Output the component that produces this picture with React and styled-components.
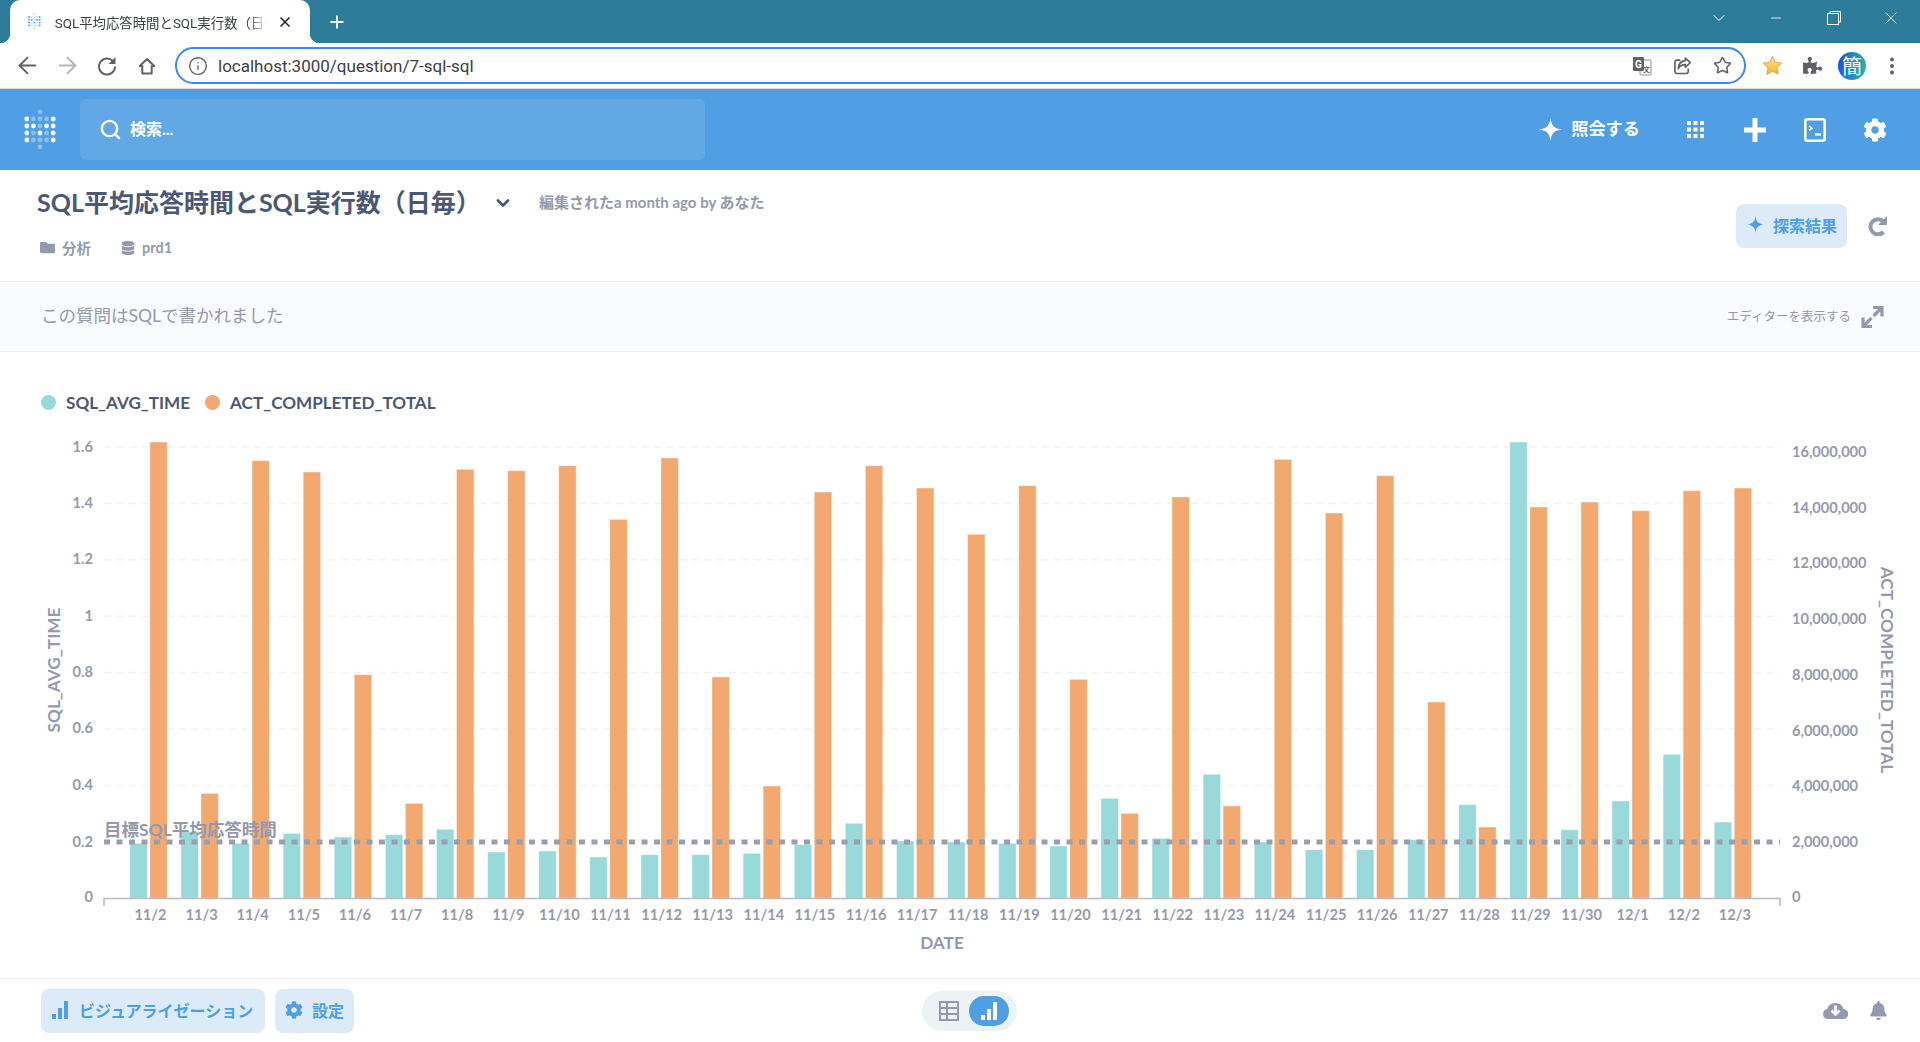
import React from "react";
import styled, { createGlobalStyle } from "styled-components";
import { ArrowLeft, ArrowRight, Info, Star, Search, ChevronDown, X, Plus, Minus } from "lucide-react";
import { FaPuzzlePiece, FaFolder, FaDatabase, FaCog, FaBell } from "react-icons/fa";

const BLUE = "#509ee3";
const DARK = "#4c5773";
const MID = "#949aab";
const UI = `Lato, "Noto Sans CJK JP", sans-serif`;
const CHROME = `Roboto, "Noto Sans CJK JP", sans-serif`;

const Global = createGlobalStyle`
  html, body { margin: 0; padding: 0; background: #fff; }
  body { font-family: ${UI}; overflow: hidden; }
  * { box-sizing: border-box; }
`;

const Page = styled.div`
  width: 1920px;
  height: 1042px;
  display: flex;
  flex-direction: column;
  overflow: hidden;
`;

/* browser chrome */
const TabStrip = styled.div`
  height: 43px;
  background: #2d7c9a;
  display: flex;
  align-items: flex-end;
  padding-left: 10px;
  flex: none;
`;
const Tab = styled.div`
  position: relative;
  width: 300px;
  height: 43px;
  background: #fff;
  border-radius: 10px 10px 0 0;
  display: flex;
  align-items: center;
  padding: 0 12px 0 18px;
  font: 400 13.4px ${CHROME};
  color: #3c4043;
  &::before, &::after {
    content: "";
    position: absolute;
    bottom: 0;
    width: 10px;
    height: 10px;
  }
  &::before { left: -10px; background: radial-gradient(circle at 0 0, transparent 10px, #fff 10.5px); }
  &::after { right: -10px; background: radial-gradient(circle at 100% 0, transparent 10px, #fff 10.5px); }
`;
const TabTitle = styled.span`
  margin-left: 14px;
  width: 212px;
  white-space: nowrap;
  overflow: hidden;
  mask-image: linear-gradient(90deg, #000 92%, transparent 100%);
`;
const TabClose = styled.span`
  margin-left: 10px;
  display: flex;
  color: #202124;
`;
const NewTab = styled.span`
  margin-left: 11px;
  width: 32px;
  height: 43px;
  display: flex;
  align-items: center;
  justify-content: center;
  color: #fff;
`;
const WindowControls = styled.div`
  margin-left: auto;
  display: flex;
  align-self: flex-start;
`;
const WindowButton = styled.span`
  width: 57.5px;
  height: 36px;
  display: flex;
  align-items: center;
  justify-content: center;
  color: #fff;
`;
const Toolbar = styled.div`
  height: 46px;
  background: #fff;
  border-bottom: 1px solid #dadce0;
  display: flex;
  align-items: center;
  padding-left: 7px;
  flex: none;
`;
const ToolButton = styled.span`
  width: 40px;
  height: 40px;
  flex: none;
  display: flex;
  align-items: center;
  justify-content: center;
  color: ${(p) => (p.$muted ? "#b4b6b9" : "#5f6368")};
`;
const AddressBar = styled.div`
  margin-left: 8px;
  width: 1571px;
  height: 37px;
  border: 2px solid #4285f4;
  border-radius: 19px;
  display: flex;
  align-items: center;
  padding: 0 2px 0 10.5px;
  flex: none;
`;
const UrlText = styled.span`
  margin-left: 10.5px;
  font: 400 17px ${CHROME};
  color: #3c4043;
`;
const AddressIcons = styled.div`
  margin-left: auto;
  display: flex;
`;
const Extensions = styled.div`
  margin-left: 6px;
  display: flex;
`;
const Avatar = styled.span`
  width: 28px;
  height: 28px;
  border-radius: 50%;
  background: linear-gradient(100deg, #2b3fe0 0%, #1c86c8 45%, #1fc28e 100%);
  color: #fff;
  display: flex;
  align-items: center;
  justify-content: center;
  font: 400 20px "Noto Sans CJK JP", sans-serif;
`;

/* metabase nav */
const Nav = styled.div`
  height: 81px;
  flex: none;
  background: ${BLUE};
  display: flex;
  align-items: center;
  color: #fff;
`;
const LogoSlot = styled.div`
  width: 80px;
  display: flex;
  justify-content: center;
`;
const SearchBox = styled.div`
  width: 625px;
  height: 61px;
  border-radius: 6px;
  background: #62a8e6;
  display: flex;
  align-items: center;
  gap: 8px;
  padding-left: 19px;
  font: 700 16px/20px ${UI};
`;
const SearchLabel = styled.span`
  position: relative;
  top: -1px;
`;
const NavActions = styled.div`
  margin-left: auto;
  display: flex;
  align-items: center;
  padding-right: 15px;
`;
const AskQuestion = styled.div`
  display: flex;
  align-items: center;
  gap: 9px;
  margin-right: 25px;
  font: 700 17.2px/22px ${UI};
`;
const AskLabel = styled.span`
  position: relative;
  top: -1px;
`;
const NavIcon = styled.span`
  width: 60px;
  display: flex;
  justify-content: center;
  align-items: center;
`;

/* question header */
const Header = styled.div`
  height: 111px;
  flex: none;
  display: flex;
  justify-content: space-between;
  align-items: center;
  padding: 0 32px 0 37px;
`;
const HeaderLeft = styled.div`
  display: flex;
  flex-direction: column;
  gap: 21px;
  padding-bottom: 9px;
`;
const TitleRow = styled.div`
  display: flex;
  align-items: center;
  height: 32px;
`;
const Title = styled.h1`
  margin: 0;
  font: 700 25px ${UI};
  color: ${DARK};
  white-space: nowrap;
  width: 431px;
`;
const TitleCaret = styled.span`
  margin-left: 25px;
  margin-top: 5px;
  display: flex;
  color: ${DARK};
`;
const Edited = styled.span`
  margin-left: 26px;
  margin-top: 2px;
  font: 700 15px ${UI};
  color: ${MID};
`;
const Crumbs = styled.div`
  display: flex;
  align-items: center;
  gap: 30px;
  padding-left: 3px;
  height: 20px;
`;
const Crumb = styled.span`
  display: flex;
  align-items: center;
  gap: 7px;
  font: 700 14.5px ${UI};
  color: ${MID};
`;
const HeaderRight = styled.div`
  display: flex;
  align-items: center;
  gap: 21px;
`;
const SoftButton = styled.div`
  height: 44px;
  border-radius: 8px;
  background: #ddebf9;
  color: ${BLUE};
  display: flex;
  align-items: center;
  gap: 9px;
  padding: 0 10px 2px 11px;
  font: 700 16px ${UI};
`;
const RefreshSlot = styled.span`
  display: flex;
  color: ${MID};
`;

/* native query bar */
const NativeBar = styled.div`
  height: 71px;
  flex: none;
  background: #f9fbfc;
  border-top: 1px solid #edf0f2;
  border-bottom: 1px solid #edf0f2;
  display: flex;
  align-items: center;
  justify-content: space-between;
  padding: 0 36px 0 41px;
  color: ${MID};
`;
const NativeNote = styled.span`
  font: 400 17.5px ${UI};
  padding-bottom: 4px;
`;
const EditorToggle = styled.span`
  display: flex;
  align-items: center;
  gap: 10px;
  font: 400 12.5px ${UI};
`;
const EditorLabel = styled.span`
  padding-bottom: 2px;
`;

/* chart */
const Main = styled.div`
  flex: 1;
  min-height: 0;
  display: flex;
  flex-direction: column;
`;
const Legend = styled.div`
  display: flex;
  align-items: center;
  height: 20px;
  margin-top: 40px;
  padding-left: 41px;
  flex: none;
`;
const LegendItem = styled.div`
  display: flex;
  align-items: center;
  gap: 10px;
  margin-right: 15px;
  font: 700 17.1px ${UI};
  color: ${DARK};
`;
const LegendDot = styled.span`
  width: 15px;
  height: 15px;
  border-radius: 50%;
  background: ${(p) => p.$color};
`;
const ChartSvg = styled.svg`
  display: block;
  width: 1920px;
  height: 548px;
  margin-top: 18px;
  flex: none;
`;
const GridLine = styled.line`
  stroke: #f2f2f3;
  stroke-width: 1.5;
  stroke-dasharray: 7 5.5;
`;
const Bar = styled.rect`
  fill: ${(p) => p.$color};
  stroke: #fff;
  stroke-opacity: 0.45;
  stroke-width: 1;
`;
const AxisPath = styled.path`
  stroke: #b8bbc3;
  stroke-width: 1.5;
  fill: none;
`;
const TickText = styled.text`
  font: 700 14.6px ${UI};
  fill: ${MID};
`;
const AxisTitle = styled.text`
  font: 700 17.2px ${UI};
  fill: ${MID};
`;
const GoalLine = styled.line`
  stroke: #9a9fb0;
  stroke-width: 5;
  stroke-dasharray: 6 6.5;
`;
const GoalLabel = styled.text`
  font: 700 17.5px ${UI};
  fill: ${MID};
`;

/* footer */
const Footer = styled.div`
  height: 64px;
  flex: none;
  border-top: 1px solid #edf0f2;
  display: flex;
  align-items: center;
  padding: 0 32px 0 41px;
`;
const VizButton = styled(SoftButton)`
  width: 224px;
  margin-right: 10px;
  gap: 11px;
  padding: 0 0 2px 11px;
`;
const SettingsButton = styled(SoftButton)`
  width: 79px;
  gap: 9px;
  padding: 0 0 2px 10px;
`;
const ViewToggle = styled.div`
  margin-left: 568px;
  width: 95px;
  height: 40px;
  border-radius: 20px;
  background: #edf2f5;
  display: flex;
  align-items: center;
  padding-left: 17px;
  gap: 10px;
`;
const ViewOn = styled.span`
  width: 40px;
  height: 30px;
  border-radius: 15px;
  background: ${BLUE};
  display: flex;
  align-items: center;
  justify-content: center;
`;
const FooterIcons = styled.div`
  margin-left: auto;
  display: flex;
  align-items: center;
  gap: 21px;
  color: ${MID};
`;

/* icons */
const Sparkle = ({ size, color }) => (
  <svg width={size} height={size} viewBox="0 0 24 24" fill={color}>
    <path d="M12 0C12.8 7 15 11 24 12 15 13 12.8 17 12 24 11.2 17 9 13 0 12 9 11 11.2 7 12 0Z" />
  </svg>
);

const logoDots = [
  [0, 2, 0.35],
  [1, 0, 1], [1, 1, 0.35], [1, 2, 0.35], [1, 3, 0.35], [1, 4, 1],
  [2, 0, 1], [2, 1, 1], [2, 2, 0.35], [2, 3, 1], [2, 4, 1],
  [3, 0, 1], [3, 1, 0.35], [3, 2, 1], [3, 3, 0.35], [3, 4, 1],
  [4, 0, 1], [4, 1, 0.35], [4, 2, 0.35], [4, 3, 0.35], [4, 4, 1],
  [5, 2, 0.35],
];
const Logo = ({ color = "#fff", scale = 1 }) => (
  <svg width={32 * scale} height={41 * scale} viewBox="0 0 32 41" fill={color}>
    {logoDots.map(([r, c, o]) => (
      <circle key={`${r}-${c}`} cx={2.8 + c * 6.6} cy={3 + r * 7} r="2.4" opacity={o} />
    ))}
  </svg>
);

const BarsIcon = ({ color, size = 16 }) => (
  <svg width={size} height={size + 2} viewBox="0 0 16 18" fill={color}>
    <rect x="0" y="13" width="4" height="5" />
    <rect x="6" y="7" width="4" height="11" />
    <rect x="12" y="0" width="4" height="18" />
  </svg>
);

const AppsIcon = () => (
  <svg width="17" height="17" viewBox="0 0 17 17" fill="#fff">
    {[0, 6.5, 13].flatMap((x) =>
      [0, 6.5, 13].map((y) => <rect key={`${x}-${y}`} x={x} y={y} width="4" height="4" />)
    )}
  </svg>
);

const PlusIcon = () => (
  <svg width="22" height="24" viewBox="0 0 22 24" fill="#fff">
    <rect x="0" y="9.5" width="22" height="5" />
    <rect x="8.5" y="0" width="5" height="24" />
  </svg>
);

const TerminalIcon = () => (
  <svg width="22" height="24" viewBox="0 0 22 24" fill="none" stroke="#fff">
    <rect x="1.3" y="1.3" width="19.4" height="21.4" rx="2" strokeWidth="2.6" />
    <path d="M5 8l3 2.2-3 2.2" strokeWidth="1.5" />
    <path d="M11 16.5h6" strokeWidth="2.4" />
  </svg>
);

const RefreshIcon = () => (
  <svg width="20" height="22" viewBox="0 0 20 22" fill="none" stroke="currentColor">
    <path d="M15.5 6.5A7.6 7.6 0 1 0 15.5 17" strokeWidth="4" />
    <path d="M19 1v9h-9z" fill="currentColor" stroke="none" />
  </svg>
);

const ExpandIcon = () => (
  <svg width="23" height="24" viewBox="0 0 23 24" fill="none" stroke={MID} strokeWidth="3.2">
    <path d="M12 2.5h9v9M21 2.5l-8.5 8.5" />
    <path d="M2 12.5v9h9M2 21.5l8.5-8.5" />
  </svg>
);

const TableIcon = () => (
  <svg width="20" height="20" viewBox="0 0 20 20" fill="none" stroke={MID} strokeWidth="2">
    <rect x="1" y="1" width="18" height="18" />
    <path d="M1 7h18M1 13h18M8 1v18" />
  </svg>
);

const ReloadIcon = () => (
  <svg width="20" height="20" viewBox="0 0 20 20" fill="none" stroke="currentColor" strokeWidth="2">
    <path d="M16 5.2A8 8 0 1 0 18 10.500" />
    <path d="M18.500 1v7h-7z" fill="currentColor" stroke="none" />
  </svg>
);

const HomeIcon = () => (
  <svg width="18" height="18" viewBox="0 0 18 18" fill="none" stroke="currentColor" strokeWidth="2" strokeLinejoin="round">
    <path d="M9 2L1.800 9h2.500v7.500h9.400V9h2.500z" />
  </svg>
);

const CloudDownloadIcon = () => (
  <svg width="25" height="17" viewBox="0 0 25 17">
    <path d="M5 17a5 5 0 0 1-.8-9.900A8.500 8.500 0 0 1 20.500 7a5 5 0 0 1-.5 10z" fill={MID} />
    <path d="M12.500 3.500v8.500M8.500 8.500l4 4 4-4" fill="none" stroke="#fff" strokeWidth="2.600" />
  </svg>
);

const TranslateIcon = () => (
  <svg width="20" height="20" viewBox="0 0 20 20">
    <rect x="8" y="4" width="11" height="15" rx="1" fill="#fff" stroke="#8a8d91" />
    <rect x="1" y="1" width="11" height="14" rx="1" fill="#5f6368" />
    <text x="6.5" y="11.5" textAnchor="middle" fontFamily="Roboto, sans-serif" fontWeight="700" fontSize="10" fill="#fff">G</text>
    <text x="14.5" y="16" textAnchor="middle" fontFamily="Noto Sans CJK JP, sans-serif" fontWeight="700" fontSize="7" fill="#5f6368">文</text>
  </svg>
);

const ShareIcon = () => (
  <svg width="20" height="20" viewBox="0 0 24 24" fill="none" stroke="#5f6368" strokeWidth="2" strokeLinejoin="round">
    <path d="M16 2.5l6 5.5-6 5.5v-3.2c-4.5 0-7 1.7-8.5 5 .2-6 3.2-9.300 8.500-9.800z" />
    <path d="M10 5H6a2.500 2.500 0 0 0-2.500 2.500v11A2.500 2.500 0 0 0 6 21h11a2.500 2.500 0 0 0 2.500-2.500V15" />
  </svg>
);

const RestoreIcon = () => (
  <svg width="14" height="14" viewBox="0 0 14 14" fill="none" stroke="#fff" strokeWidth="1">
    <rect x="0.5" y="2.500" width="11" height="11" />
    <path d="M3 2.500V.5h10.500v10.500h-2" />
  </svg>
);

const GoldStar = () => (
  <svg width="21" height="21" viewBox="0 0 24 24">
    <defs>
      <linearGradient id="gold" x1="0" y1="0" x2="0" y2="1">
        <stop offset="0" stopColor="#ffe9a8" />
        <stop offset="1" stopColor="#f5b312" />
      </linearGradient>
    </defs>
    <path
      d="M12 1.500l3.200 6.900 7.300.9-5.400 5.100 1.400 7.400L12 18.600l-6.500 3.700 1.400-7.400L1.500 9.300l7.300-.9z"
      fill="url(#gold)"
      stroke="#d9a441"
      strokeWidth="1"
      strokeLinejoin="round"
    />
  </svg>
);

const Kebab = () => (
  <svg width="4" height="18" viewBox="0 0 4 18" fill="#5f6368">
    <circle cx="2" cy="2.500" r="2" />
    <circle cx="2" cy="9" r="2" />
    <circle cx="2" cy="15.500" r="2" />
  </svg>
);

/* data: top edge of each bar, in page pixels */
const labels = [
  "11/2","11/3","11/4","11/5","11/6","11/7","11/8","11/9","11/10","11/11","11/12","11/13","11/14","11/15","11/16","11/17",
  "11/18","11/19","11/20","11/21","11/22","11/23","11/24","11/25","11/26","11/27","11/28","11/29","11/30","12/1","12/2","12/3",
];
const tealTops = [
  1210,1175,1210,1180,1191,1184,1168,1236, 1233,1251,1244,1244,1240,1214,1150,1203,
  1206,1210,1218,1075,1195,1003,1206,1229, 1229,1199,1094,6,1169,1083,943,1146,
].map((z) => 440 + z / 3);
const orangeTops = [
  6,1060,62,96,704,1090,88,92, 77,238,54,711,1038,156,77,144,
  283,137,718,1120,171,1098,58,219, 107,786,1161,201,186,212,152,144,
].map((z) => 440 + z / 3);

const BASE = 898.3;
const STEP = 51.11;
const TEAL = "#98d9d9";
const ORANGE = "#f2a86f";
const gridY = [447, 503.4, 559.8, 616.2, 672.6, 729, 785.4];
const leftTicks = [
  ["1.6", 452], ["1.4", 508], ["1.2", 564], ["1", 621], ["0.8", 677], ["0.6", 733], ["0.4", 790], ["0.2", 847], ["0", 902],
];
const rightTicks = [
  ["16,000,000", 456.500], ["14,000,000", 512.500], ["12,000,000", 567.500], ["10,000,000", 623.500], ["8,000,000", 680],
  ["6,000,000", 735.500], ["4,000,000", 791], ["2,000,000", 846.500], ["0", 902],
];

const Chart = () => (
  <ChartSvg viewBox="0 430 1920 548">
    {gridY.map((y) => (
      <GridLine key={y} x1="104" x2="1780" y1={y} y2={y} />
    ))}
    {labels.map((l, i) => (
      <g key={l}>
        <Bar x={129.8 + i * STEP} y={tealTops[i]} width={17.5} height={BASE - tealTops[i]} $color={TEAL} />
        <Bar x={149.8 + i * STEP} y={orangeTops[i]} width={17.5} height={BASE - orangeTops[i]} $color={ORANGE} />
        <TickText x={150.5 + i * STEP} y="920" textAnchor="middle">{l}</TickText>
      </g>
    ))}
    <AxisPath d="M104 906V898.500H1780V906" />
    {leftTicks.map(([t, y]) => (
      <TickText key={t} x="93" y={y} textAnchor="end">{t}</TickText>
    ))}
    {rightTicks.map(([t, y]) => (
      <TickText key={t} x="1792" y={y}>{t}</TickText>
    ))}
    <GoalLine x1="104" x2="1780" y1="842" y2="842" />
    <GoalLabel x="104" y="836">目標SQL平均応答時間</GoalLabel>
    <AxisTitle x="942" y="949" textAnchor="middle">DATE</AxisTitle>
    <AxisTitle transform="rotate(-90 53 670)" x="53" y="670" textAnchor="middle" dominantBaseline="central">SQL_AVG_TIME</AxisTitle>
    <AxisTitle transform="rotate(90 1887 670)" x="1887" y="670" textAnchor="middle" dominantBaseline="central">ACT_COMPLETED_TOTAL</AxisTitle>
  </ChartSvg>
);

export default function App() {
  return (
    <Page>
      <Global />
      <TabStrip>
        <Tab>
          <Logo color={BLUE} scale={0.4} />
          <TabTitle>SQL平均応答時間とSQL実行数（日毎）</TabTitle>
          <TabClose><X size={16} strokeWidth={2.4} /></TabClose>
        </Tab>
        <NewTab><Plus size={20} strokeWidth={2.2} /></NewTab>
        <WindowControls>
          <WindowButton><ChevronDown size={20} strokeWidth={1.2} /></WindowButton>
          <WindowButton><Minus size={16} strokeWidth={1.2} /></WindowButton>
          <WindowButton><RestoreIcon /></WindowButton>
          <WindowButton><X size={20} strokeWidth={1.2} /></WindowButton>
        </WindowControls>
      </TabStrip>
      <Toolbar>
        <ToolButton><ArrowLeft size={27} strokeWidth={1.7} /></ToolButton>
        <ToolButton $muted><ArrowRight size={27} strokeWidth={1.7} /></ToolButton>
        <ToolButton><ReloadIcon /></ToolButton>
        <ToolButton><HomeIcon /></ToolButton>
        <AddressBar>
          <Info size={20} strokeWidth={1.7} color="#5f6368" />
          <UrlText>localhost:3000/question/7-sql-sql</UrlText>
          <AddressIcons>
            <ToolButton><TranslateIcon /></ToolButton>
            <ToolButton><ShareIcon /></ToolButton>
            <ToolButton><Star size={19} strokeWidth={2} /></ToolButton>
          </AddressIcons>
        </AddressBar>
        <Extensions>
          <ToolButton><GoldStar /></ToolButton>
          <ToolButton><FaPuzzlePiece size={19} /></ToolButton>
          <ToolButton><Avatar>簡</Avatar></ToolButton>
          <ToolButton><Kebab /></ToolButton>
        </Extensions>
      </Toolbar>
      <Nav>
        <LogoSlot><Logo /></LogoSlot>
        <SearchBox>
          <Search size={23} strokeWidth={2.4} />
          <SearchLabel>検索...</SearchLabel>
        </SearchBox>
        <NavActions>
          <AskQuestion>
            <Sparkle size={23} color="#fff" />
            <AskLabel>照会する</AskLabel>
          </AskQuestion>
          <NavIcon><AppsIcon /></NavIcon>
          <NavIcon><PlusIcon /></NavIcon>
          <NavIcon><TerminalIcon /></NavIcon>
          <NavIcon><FaCog size={24} /></NavIcon>
        </NavActions>
      </Nav>
      <Header>
        <HeaderLeft>
          <TitleRow>
            <Title>SQL平均応答時間とSQL実行数（日毎）</Title>
            <TitleCaret><ChevronDown size={20} strokeWidth={3.2} /></TitleCaret>
            <Edited>編集されたa month ago by あなた</Edited>
          </TitleRow>
          <Crumbs>
            <Crumb><FaFolder size={15} />分析</Crumb>
            <Crumb><FaDatabase size={14} />prd1</Crumb>
          </Crumbs>
        </HeaderLeft>
        <HeaderRight>
          <SoftButton>
            <Sparkle size={17} color={BLUE} />
            探索結果
          </SoftButton>
          <RefreshSlot><RefreshIcon /></RefreshSlot>
        </HeaderRight>
      </Header>
      <NativeBar>
        <NativeNote>この質問はSQLで書かれました</NativeNote>
        <EditorToggle><EditorLabel>エディターを表示する</EditorLabel><ExpandIcon /></EditorToggle>
      </NativeBar>
      <Main>
        <Legend>
          <LegendItem><LegendDot $color={TEAL} />SQL_AVG_TIME</LegendItem>
          <LegendItem><LegendDot $color={ORANGE} />ACT_COMPLETED_TOTAL</LegendItem>
        </Legend>
        <Chart />
      </Main>
      <Footer>
        <VizButton><BarsIcon color={BLUE} />ビジュアライゼーション</VizButton>
        <SettingsButton><FaCog size={18} />設定</SettingsButton>
        <ViewToggle>
          <TableIcon />
          <ViewOn><BarsIcon color="#fff" /></ViewOn>
        </ViewToggle>
        <FooterIcons>
          <CloudDownloadIcon />
          <FaBell size={19} />
        </FooterIcons>
      </Footer>
    </Page>
  );
}
